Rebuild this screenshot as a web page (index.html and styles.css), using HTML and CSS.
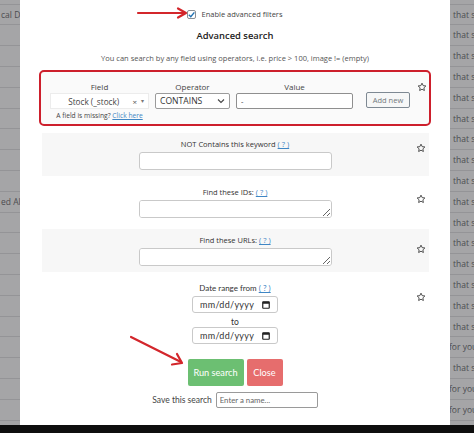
FILE: index.html
```html
<!DOCTYPE html>
<html lang="en">
<head>
    <meta charset="UTF-8">
    <meta name="viewport" content="width=device-width, initial-scale=1.0">
    <title>Advanced search</title>
    <link rel="stylesheet" href="styles.css">
</head>
<body>
    <div class="screen">
        <div class="backdrop backdrop-left">
            <div class="bg-spacer"></div>
            <div class="bg-row">cal Docs</div>
            <div class="bg-row"></div>
            <div class="bg-row"></div>
            <div class="bg-row"></div>
            <div class="bg-row"></div>
            <div class="bg-row"></div>
            <div class="bg-row"></div>
            <div class="bg-row"></div>
            <div class="bg-row"></div>
            <div class="bg-row">ed Alt text</div>
            <div class="bg-row"></div>
            <div class="bg-row"></div>
            <div class="bg-row"></div>
            <div class="bg-row"></div>
            <div class="bg-row"></div>
            <div class="bg-row"></div>
            <div class="bg-row"></div>
            <div class="bg-row"></div>
            <div class="bg-row"></div>
            <div class="bg-row"></div>
            <div class="bg-row"></div>
        </div>

        <div class="modal">
            <svg class="annotations" width="430" height="425" viewBox="0 0 430 425">
                <g fill="none" stroke="#d3262b" stroke-width="2.2" stroke-linecap="round" stroke-linejoin="round">
                    <line x1="118" y1="13" x2="165" y2="13"/>
                    <polyline points="158,8.5 166,13 158,17.5"/>
                    <line x1="111" y1="337" x2="161" y2="362"/>
                    <polyline points="157,354 162,363 152,364.5"/>
                </g>
            </svg>

            <label class="toggle">
                <span class="check">
                    <svg width="9" height="9" viewBox="0 0 10 10"><polyline points="2,5.2 4.2,7.4 8.2,2.6" fill="none" stroke="#2271b1" stroke-width="1.6"/></svg>
                </span>
                Enable advanced filters
            </label>
            <h3 class="title">Advanced search</h3>
            <p class="hint">You can search by any field using operators, i.e. price &gt; 100, image != (empty)</p>

            <div class="filter-row highlighted">
                <div class="rule">
                    <div class="rule-col col-field">
                        <span class="rule-label">Field</span>
                        <div class="select2">
                            <span class="select2-text">Stock (_stock)</span>
                            <span class="select2-clear">×</span>
                            <span class="select2-arrow">▾</span>
                        </div>
                        <span class="missing">A field is missing? <a href="#">Click here</a></span>
                    </div>
                    <div class="rule-col col-operator">
                        <span class="rule-label">Operator</span>
                        <div class="select">
                            <span>CONTAINS</span>
                            <svg width="8" height="6" viewBox="0 0 8 6"><polyline points="1,1.5 4,4.5 7,1.5" fill="none" stroke="#444" stroke-width="1.1"/></svg>
                        </div>
                    </div>
                    <div class="rule-col col-value">
                        <span class="rule-label">Value</span>
                        <input type="text" class="text-input value-input" value="-">
                    </div>
                    <button class="add-new">Add new</button>
                </div>
                <span class="star">
                    <svg width="10" height="10" viewBox="0 0 24 24"><path d="M12 2.8l2.8 5.9 6.5.8-4.8 4.5 1.2 6.4L12 17.3l-5.7 3.1 1.2-6.4-4.8-4.5 6.5-.8z" fill="none" stroke="#333" stroke-width="2" stroke-linejoin="round"/></svg>
                </span>
            </div>

            <div class="filter-row shaded">
                <div class="field">
                    <span class="field-label">NOT Contains this keyword <a href="#">( ? )</a></span>
                    <input type="text" class="text-input wide-input">
                </div>
                <span class="star">
                    <svg width="10" height="10" viewBox="0 0 24 24"><path d="M12 2.8l2.8 5.9 6.5.8-4.8 4.5 1.2 6.4L12 17.3l-5.7 3.1 1.2-6.4-4.8-4.5 6.5-.8z" fill="none" stroke="#333" stroke-width="2" stroke-linejoin="round"/></svg>
                </span>
            </div>

            <div class="filter-row">
                <div class="field">
                    <span class="field-label">Find these IDs: <a href="#">( ? )</a></span>
                    <textarea class="text-input wide-input"></textarea>
                </div>
                <span class="star star-mid">
                    <svg width="10" height="10" viewBox="0 0 24 24"><path d="M12 2.8l2.8 5.9 6.5.8-4.8 4.5 1.2 6.4L12 17.3l-5.7 3.1 1.2-6.4-4.8-4.5 6.5-.8z" fill="none" stroke="#333" stroke-width="2" stroke-linejoin="round"/></svg>
                </span>
            </div>

            <div class="filter-row shaded">
                <div class="field">
                    <span class="field-label">Find these URLs: <a href="#">( ? )</a></span>
                    <textarea class="text-input wide-input"></textarea>
                </div>
                <span class="star star-low">
                    <svg width="10" height="10" viewBox="0 0 24 24"><path d="M12 2.8l2.8 5.9 6.5.8-4.8 4.5 1.2 6.4L12 17.3l-5.7 3.1 1.2-6.4-4.8-4.5 6.5-.8z" fill="none" stroke="#333" stroke-width="2" stroke-linejoin="round"/></svg>
                </span>
            </div>

            <div class="filter-row">
                <div class="field alt-font">
                    <span class="field-label">Date range from <a href="#">( ? )</a></span>
                    <div class="date-input">
                        <span>mm/dd/yyyy</span>
                        <svg width="8" height="8" viewBox="0 0 8 8"><rect x="0.75" y="0.75" width="6.5" height="6.5" rx="0.5" fill="none" stroke="#222" stroke-width="1.2"/><rect x="0.75" y="0.75" width="6.5" height="2" fill="#222"/></svg>
                    </div>
                    <span class="to">to</span>
                    <div class="date-input">
                        <span>mm/dd/yyyy</span>
                        <svg width="8" height="8" viewBox="0 0 8 8"><rect x="0.75" y="0.75" width="6.5" height="6.5" rx="0.5" fill="none" stroke="#222" stroke-width="1.2"/><rect x="0.75" y="0.75" width="6.5" height="2" fill="#222"/></svg>
                    </div>
                </div>
                <span class="star star-lower">
                    <svg width="10" height="10" viewBox="0 0 24 24"><path d="M12 2.8l2.8 5.9 6.5.8-4.8 4.5 1.2 6.4L12 17.3l-5.7 3.1 1.2-6.4-4.8-4.5 6.5-.8z" fill="none" stroke="#333" stroke-width="2" stroke-linejoin="round"/></svg>
                </span>
            </div>

            <div class="actions">
                <button class="btn btn-run">Run search</button>
                <button class="btn btn-close">Close</button>
            </div>

            <div class="save-row">
                <span>Save this search</span>
                <input type="text" class="save-input" placeholder="Enter a name...">
            </div>
        </div>

        <div class="backdrop backdrop-right">
            <div class="bg-spacer"></div>
            <div class="bg-row">that sells</div>
            <div class="bg-row">that sells</div>
            <div class="bg-row">that sells</div>
            <div class="bg-row">that sells</div>
            <div class="bg-row">that sells</div>
            <div class="bg-row">that sells</div>
            <div class="bg-row">that sells</div>
            <div class="bg-row">that sells</div>
            <div class="bg-row">that sells</div>
            <div class="bg-row">that sells</div>
            <div class="bg-row">that sells</div>
            <div class="bg-row">that sells</div>
            <div class="bg-row">that sells</div>
            <div class="bg-row">that sells</div>
            <div class="bg-row">that sells</div>
            <div class="bg-row">that sells</div>
            <div class="bg-row cut">for you</div>
            <div class="bg-row">that sells</div>
            <div class="bg-row cut">for you</div>
            <div class="bg-row cut">for you</div>
        </div>
    </div>
    <div class="taskbar"></div>
</body>
</html>
```

FILE: styles.css
```css
* {
    box-sizing: border-box;
}
body {
    margin: 0;
    width: 474px;
    height: 433px;
    overflow: hidden;
    background-color: #0e0e0e;
    font-family: "Open Sans", "Noto Sans", sans-serif;
}
.screen {
    display: flex;
    height: 425px;
}
.taskbar {
    height: 8px;
    background-color: #0e0e0e;
}

/* dimmed table behind the dialog */
.backdrop {
    background-color: #a5a5a7;
    color: #4c4c50;
    font-size: 8.5px;
    overflow: hidden;
}
.backdrop-left {
    width: 20px;
}
.backdrop-right {
    width: 24px;
}
.bg-spacer {
    height: 4.6px;
    border-bottom: 1px solid #949497;
}
.bg-row {
    height: 20.8px;
    line-height: 20px;
    white-space: nowrap;
    border-bottom: 1px solid #949497;
}
.backdrop-left .bg-row {
    padding-left: 1px;
}
.backdrop-right .bg-row {
    padding-left: 3px;
}
.backdrop-right .bg-row.cut {
    padding-left: 0;
    text-indent: -1px;
}

/* dialog */
.modal {
    position: relative;
    width: 430px;
    background-color: #fff;
    color: #333;
    display: flex;
    flex-direction: column;
    align-items: center;
}
.annotations {
    position: absolute;
    top: 0;
    left: 0;
    pointer-events: none;
    z-index: 2;
}
.toggle {
    margin-top: 9px;
    display: flex;
    align-items: center;
    gap: 5px;
    font-size: 7.5px;
    line-height: 10px;
    color: #444;
}
.check {
    width: 9px;
    height: 9px;
    border: 1px solid #8c8f94;
    border-radius: 2px;
    background-color: #fff;
    display: flex;
    align-items: center;
    justify-content: center;
}
.check svg {
    flex: none;
}
.title {
    margin: 10px 0 0;
    font-size: 9.4px;
    line-height: 14px;
    font-weight: 600;
    color: #222;
}
.hint {
    margin: 9px 0 0;
    font-size: 7.5px;
    line-height: 12px;
    color: #555;
}
a {
    color: #3f86c4;
}

/* filter rows */
.filter-row {
    width: 387px;
    margin-top: 5px;
    padding: 6px 3px 6px;
    display: grid;
    grid-template-columns: 1fr auto 1fr;
}
.filter-row.shaded {
    background-color: #f7f7f7;
}
.filter-row.highlighted {
    width: 392px;
    margin-top: 6px;
    margin-bottom: 2px;
    padding: 0 2px 0 0;
    border: 2px solid #cd1f2c;
    border-radius: 5px;
    display: flex;
    background-color: #fafafa;
}
.star {
    grid-column: 3;
    justify-self: end;
    margin-top: 4px;
    height: 10px;
}
.star svg {
    display: block;
}
.star-mid {
    margin-top: 7px;
}
.star-low {
    margin-top: 9px;
}
.star-lower {
    margin-top: 9px;
}
.highlighted .star {
    margin-top: 10px;
    margin-left: auto;
}
.field {
    grid-column: 2;
    display: flex;
    flex-direction: column;
    align-items: center;
}
.field-label {
    font-size: 7.5px;
    line-height: 10px;
    margin-bottom: 3px;
    color: #333;
}
.text-input {
    font-family: inherit;
    border: 1px solid #c9c9c9;
    border-radius: 3px;
    background-color: #fff;
    margin: 0;
}
.wide-input {
    display: block;
    width: 193px;
    height: 18px;
    resize: vertical;
}

/* highlighted rule */
.rule {
    display: flex;
    align-items: flex-start;
    padding: 10px 0 4px 9px;
}
.rule-col {
    display: flex;
    flex-direction: column;
    align-items: center;
    margin-right: 6px;
}
.rule-label {
    font-size: 8px;
    line-height: 10px;
    margin-bottom: 1px;
    color: #444;
}
.select2 {
    width: 99px;
    height: 16px;
    background-color: #fff;
    border: 1px solid #ececec;
    display: flex;
    align-items: center;
    font-size: 8.2px;
    color: #444;
}
.select2-text {
    flex: 1;
    text-align: center;
    padding-left: 4px;
}
.select2-clear {
    font-size: 8px;
    margin-right: 4px;
    color: #555;
}
.select2-arrow {
    font-size: 6px;
    margin-right: 4px;
    color: #777;
}
.missing {
    margin-top: 3px;
    font-size: 6.7px;
    line-height: 8px;
    color: #444;
}
.select {
    width: 75px;
    height: 16px;
    border: 1px solid #9b9b9b;
    border-radius: 2px;
    background-color: #fff;
    display: flex;
    align-items: center;
    justify-content: space-between;
    padding: 0 4px 0 4px;
    font-size: 8.6px;
    color: #333;
}
.value-input {
    width: 117px;
    height: 16px;
    border-color: #8f8f8f;
    border-radius: 2px;
    font-size: 7.5px;
    padding: 0 4px;
    color: #333;
}
.col-value {
    margin-right: 13px;
}
.add-new {
    margin-top: 10px;
    width: 44px;
    height: 16px;
    padding: 0;
    font-family: inherit;
    font-size: 7.5px;
    color: #72777c;
    background-color: #f6f7f7;
    border: 1px solid #7e8993;
    border-radius: 2px;
}

/* date range */
.alt-font {
    font-family: Lato, "Open Sans", sans-serif;
}
.alt-font .field-label {
    font-size: 8px;
}
.date-input {
    width: 86px;
    height: 17px;
    border: 1px solid #c9c9c9;
    border-radius: 3px;
    display: flex;
    align-items: center;
    justify-content: space-between;
    padding: 0 7px 0 7px;
    font-size: 9px;
    letter-spacing: 0.3px;
    color: #333;
}
.to {
    font-size: 8.5px;
    line-height: 10px;
    margin: 4px 0 0;
}

/* buttons */
.actions {
    margin-top: 9px;
    display: flex;
    gap: 3px;
}
.btn {
    height: 27px;
    border: none;
    border-radius: 2px;
    color: #fff;
    font-family: Lato, "Open Sans", sans-serif;
    font-size: 9.2px;
    padding: 0;
}
.btn-run {
    width: 56px;
    background-color: #6cbf72;
}
.btn-close {
    width: 36px;
    background-color: #e66d6d;
}
.save-row {
    margin-top: 6px;
    display: flex;
    align-items: center;
    gap: 4px;
    font-family: Lato, "Open Sans", sans-serif;
    font-size: 8.5px;
    color: #444;
}
.save-input {
    width: 102px;
    height: 16px;
    border: 1px solid #9a9a9a;
    border-radius: 2px;
    font-family: inherit;
    font-size: 7.8px;
    padding: 0 3px;
    margin: 0;
}
.save-input::placeholder {
    color: #666;
}
```
